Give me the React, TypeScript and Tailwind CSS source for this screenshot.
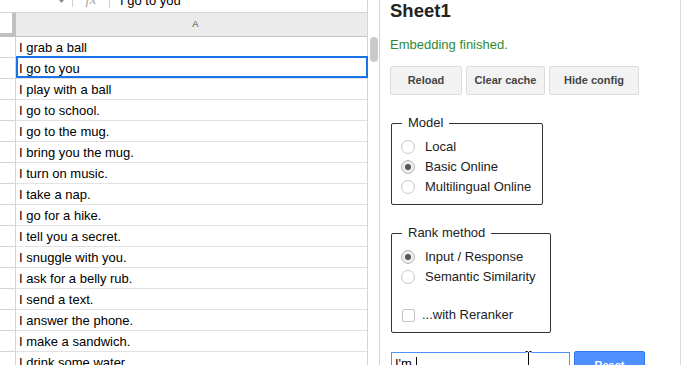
import React from "react";

const ROWS = [
  "I grab a ball",
  "I go to you",
  "I play with a ball",
  "I go to school.",
  "I go to the mug.",
  "I bring you the mug.",
  "I turn on music.",
  "I take a nap.",
  "I go for a hike.",
  "I tell you a secret.",
  "I snuggle with you.",
  "I ask for a belly rub.",
  "I send a text.",
  "I answer the phone.",
  "I make a sandwich.",
  "I drink some water.",
];

const Radio = ({ checked, label }: { checked?: boolean; label: string }) => (
  <div className="flex h-[20px] items-center">
    <span
      className={`-ml-[1px] flex h-[14px] w-[14px] items-center justify-center rounded-full border ${
        checked ? "border-[#b8b8b8] bg-[#ededed]" : "border-[#cacaca] bg-white"
      }`}
    >
      {checked && <span className="h-[6px] w-[6px] rounded-full bg-[#555]" />}
    </span>
    <span className="ml-[10px] leading-[16px]">{label}</span>
  </div>
);

const GrayButton = ({ label, width }: { label: string; width: string }) => (
  <button
    className={`flex h-[29px] ${width} items-center justify-center rounded-[2px] border border-[#dcdcdc] bg-[#f2f2f2] text-[11px] font-bold text-[#444]`}
  >
    {label}
  </button>
);

export default function App() {
  return (
    <div className="flex h-[365px] w-[695px] overflow-hidden bg-white font-['Liberation_Sans',Arial,sans-serif] text-[13px] text-[#222]">
      {/* Spreadsheet side */}
      <div className="flex w-[380px] shrink-0">
        <div className="w-[367px] shrink-0">
          {/* Formula bar (scrolled mostly out of view) */}
          <div className="flex h-[13px] items-start overflow-hidden border-b border-[#d4d4d4]">
            <div className="flex w-[72px] justify-end pr-[8px]">
              <svg width="5" height="3" viewBox="0 0 5 3">
                <path d="M0 0 L5 0 L2.5 3 Z" fill="#8a8a8a" />
              </svg>
            </div>
            <div className="h-[7px] w-px bg-[#d0d0d0]" />
            <div className="flex w-[36px] justify-center">
              <span className="-mt-[9px] font-['Liberation_Serif',serif] text-[15px] italic leading-[16px] text-[#a8a8a8]">
                fx
              </span>
            </div>
            <div className="h-[8px] w-px bg-[#d0d0d0]" />
            <span className="-mt-[7px] pl-[10px] leading-[16px] text-black">I go to you</span>
          </div>

          {/* Column header */}
          <div className="flex h-[24px]">
            <div className="w-[16px] border-r-4 border-b-4 border-[#c0c0c0] bg-white" />
            <div className="flex flex-1 items-center justify-center border-b border-[#c4c4c4] bg-[#ebebeb] pl-[8px] text-[9.5px] text-[#555]">
              A
            </div>
          </div>

          {/* Rows */}
          {ROWS.map((text, i) => (
            <div key={text} className="flex h-[21px]">
              <div className="w-[16px] border-r border-b border-[#d4d4d4]" />
              <div className="relative flex-1 border-b border-[#e2e2e2] pt-[1px] pl-[3px] leading-[19px] text-black">
                {text}
                {i === 1 && (
                  <div className="absolute -top-[2px] bottom-0 left-0 -right-[1px] border-2 border-[#1a73e8]" />
                )}
              </div>
            </div>
          ))}
        </div>

        {/* Scrollbar */}
        <div className="w-[13px] shrink-0 border-x border-[#d4d4d4] pt-[37px]">
          <div className="mx-auto h-[25px] w-[8px] rounded-full bg-[#c9c9c9]" />
        </div>
      </div>

      {/* Sidebar */}
      <div className="w-[301px] shrink-0 border-r border-[#dadada] pl-[10px]">
        <div className="text-[18.5px] font-bold leading-[22px] text-[#222]">Sheet1</div>
        <div className="mt-[15px] leading-[16px] text-[#2f8a34]">Embedding finished.</div>

        <div className="mt-[13px] flex gap-[4px]">
          <GrayButton label="Reload" width="w-[72px]" />
          <GrayButton label="Clear cache" width="w-[79px]" />
          <GrayButton label="Hide config" width="w-[90px]" />
        </div>

        <fieldset className="mt-[20px] ml-[1px] w-[152px] rounded-[2px] border border-[#333] pt-[6px] pr-[8px] pb-[7px] pl-[10px]">
          <legend className="px-[6px] leading-[16px]">Model</legend>
          <Radio label="Local" />
          <Radio label="Basic Online" checked />
          <Radio label="Multilingual Online" />
        </fieldset>

        <fieldset className="mt-[20px] ml-[1px] w-[160px] rounded-[2px] border border-[#333] pt-[6px] pr-[8px] pb-[7px] pl-[10px]">
          <legend className="px-[6px] leading-[16px]">Rank method</legend>
          <Radio label="Input / Response" checked />
          <Radio label="Semantic Similarity" />
          <div className="mt-[18px] flex h-[20px] items-center">
            <span className="h-[13px] w-[13px] rounded-[2px] border border-[#c4c4c4] bg-white" />
            <span className="ml-[7px] leading-[16px]">...with Reranker</span>
          </div>
        </fieldset>

        <div className="mt-[19px] flex items-start gap-[4px]">
          <div className="relative ml-[1px] flex h-[29px] w-[179px] items-start border border-[#4d90fe] pt-[3px] pl-[3px] leading-[16px] text-black">
            <span>I'm&nbsp;</span>
            <span className="mt-[1px] h-[15px] w-px bg-black" />
            <svg
              className="absolute -top-[2px] left-[133px]"
              width="7"
              height="16"
              viewBox="0 0 7 16"
            >
              <path d="M0.5 0.5 H2.5 L3.5 1.5 L4.5 0.5 H6.5 M3.5 1.5 V16" stroke="#fff" strokeWidth="2.2" fill="none" />
              <path d="M0.5 0.5 H2.5 L3.5 1.5 L4.5 0.5 H6.5 M3.5 1.5 V16" stroke="#000" strokeWidth="1" fill="none" />
            </svg>
          </div>
          <button className="-mt-[1px] flex h-[29px] w-[71px] items-center justify-center rounded-[2px] border border-[#3079ed] bg-[#4d90fe] text-[11px] font-bold text-white">
            Reset
          </button>
        </div>
      </div>
    </div>
  );
}
